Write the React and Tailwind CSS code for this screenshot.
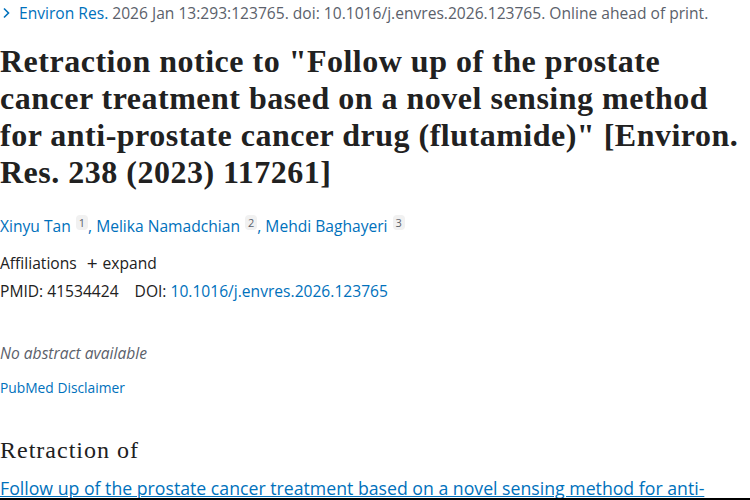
const sans = "font-['Open_Sans','Liberation_Sans',sans-serif]";
const serif = "font-['Liberation_Serif','DejaVu_Serif',serif]";

function Sup({ n }) {
  return (
    <sup className="ml-[5px] rounded-sm bg-[#f1f1f1] px-[3px] text-[11px] text-[#5b616b]">{n}</sup>
  );
}

export default function App() {
  return (
    <div className={`h-[500px] overflow-hidden border-b-2 border-black bg-white text-[#212121] ${sans}`}>
      {/* citation line */}
      <div className="flex items-center pt-[3px] text-[15.6px] leading-[20px] text-[#5b616b]">
        <svg width="14" height="14" viewBox="0 0 14 14" className="mr-[5px] shrink-0">
          <path d="M4 2.5 8.5 7 4 11.5" fill="none" stroke="#0071bc" strokeWidth="1.6" />
        </svg>
        <span className="text-[#0071bc]">Environ Res.</span>
        <span className="ml-[4px]">2026 Jan 13:293:123765. doi: 10.1016/j.envres.2026.123765. Online ahead of print.</span>
      </div>

      {/* title */}
      <h1 className={`mt-[20px] text-[32px] font-bold leading-[37px] tracking-[0.5px] ${serif}`}>
        Retraction notice to "Follow up of the prostate
        <br />
        cancer treatment based on a novel sensing method
        <br />
        for anti-prostate cancer drug (flutamide)" [Environ.
        <br />
        Res. 238 (2023) 117261]
      </h1>

      {/* authors */}
      <div className="mt-[25px] text-[15.6px] leading-[20px] text-[#0071bc]">
        Xinyu Tan<Sup n="1" />, Melika Namadchian<Sup n="2" />, Mehdi Baghayeri<Sup n="3" />
      </div>

      <div className="mt-[17px] flex items-center text-[15.6px] leading-[20px]">
        <span>Affiliations</span>
        <span className="ml-[10px] text-[19px] leading-[18px]">+</span>
        <span className="ml-[5px]">expand</span>
      </div>

      <div className="mt-[8px] text-[15.6px] leading-[20px]">
        PMID: 41534424<span className="ml-[16px]">DOI: </span>
        <span className="text-[#0071bc]">10.1016/j.envres.2026.123765</span>
      </div>

      <div className="mt-[42px] text-[15.6px] italic leading-[20px] text-[#5b616b]">No abstract available</div>

      <div className="mt-[16px] text-[13.8px] leading-[18px] text-[#0071bc]">PubMed Disclaimer</div>

      <h2 className={`mt-[38px] text-[24px] leading-[30px] tracking-[1px] ${serif}`}>Retraction of</h2>

      <div className="mt-[11px] text-[17.7px] leading-[24px] text-[#0071bc] underline">
        Follow up of the prostate cancer treatment based on a novel sensing method for anti-prostate cancer drug (flutamide)
      </div>
    </div>
  );
}
